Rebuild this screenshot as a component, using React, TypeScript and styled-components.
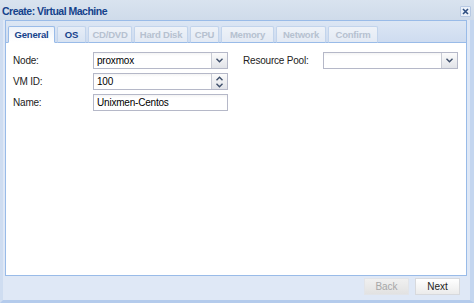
import styled, { createGlobalStyle } from 'styled-components';

const GlobalStyle = createGlobalStyle`
  html, body {
    margin: 0;
    padding: 0;
    background: #ffffff;
  }
  body {
    font-family: "Liberation Sans", Arial, sans-serif;
    font-size: 10px;
  }
`;

interface TabDef {
  label: string;
  active?: boolean;
  disabled?: boolean;
  width: number;
}

const tabs: TabDef[] = [
  { label: "General", active: true, width: 47 },
  { label: "OS", width: 29 },
  { label: "CD/DVD", disabled: true, width: 44 },
  { label: "Hard Disk", disabled: true, width: 54 },
  { label: "CPU", disabled: true, width: 29 },
  { label: "Memory", disabled: true, width: 53 },
  { label: "Network", disabled: true, width: 50 },
  { label: "Confirm", disabled: true, width: 50 },
];

const ChevronDown = () => (
  <svg width="7" height="5" viewBox="0 0 7 5">
    <path d="M0.5 0.8 L3.5 3.8 L6.5 0.8" stroke="#3d4e6a" strokeWidth="1.4" fill="none" />
  </svg>
);

const SpinIcon = () => (
  <svg width="7" height="12" viewBox="0 0 7 12">
    <path d="M0.5 4.2 L3.5 1.2 L6.5 4.2" stroke="#3d4e6a" strokeWidth="1.4" fill="none" />
    <path d="M0.5 7.8 L3.5 10.8 L6.5 7.8" stroke="#3d4e6a" strokeWidth="1.4" fill="none" />
  </svg>
);

const CloseIcon = () => (
  <svg width="7" height="7" viewBox="0 0 7 7">
    <path d="M1 1 L6 6 M6 1 L1 6" stroke="#2f4f82" strokeWidth="1.6" fill="none" />
  </svg>
);

function TextField({ value, trigger }: { value: string; trigger?: 'combo' | 'spin' }) {
  return (
    <FieldBox>
      <FieldText>{value}</FieldText>
      {trigger && (
        <Trigger>{trigger === 'combo' ? <ChevronDown /> : <SpinIcon />}</Trigger>
      )}
    </FieldBox>
  );
}

export default function App() {
  return (
    <>
      <GlobalStyle />
      <Window>
        <Header>
          <Title>Create: Virtual Machine</Title>
          <CloseButton><CloseIcon /></CloseButton>
        </Header>
        <Body>
          <TabPanel>
            <TabStrip>
              {tabs.map(t => (
                <Tab key={t.label} $active={t.active} $disabled={t.disabled} $width={t.width}>
                  {t.label}
                </Tab>
              ))}
            </TabStrip>
            <Content>
              <Column>
                <Row>
                  <Label>Node:</Label>
                  <TextField value="proxmox" trigger="combo" />
                </Row>
                <Row>
                  <Label>VM ID:</Label>
                  <TextField value="100" trigger="spin" />
                </Row>
                <Row>
                  <Label>Name:</Label>
                  <TextField value="Unixmen-Centos" />
                </Row>
              </Column>
              <Column>
                <Row>
                  <Label>Resource Pool:</Label>
                  <TextField value="" trigger="combo" />
                </Row>
              </Column>
            </Content>
          </TabPanel>
          <Footer>
            <Button $disabled>Back</Button>
            <Button>Next</Button>
          </Footer>
        </Body>
      </Window>
    </>
  );
}

const Window = styled.div`
  width: 474px;
  height: 303px;
  box-sizing: border-box;
  display: flex;
  flex-direction: column;
  background: #dfe8f6;
  border-right: 4px solid #c4d6ef;
  border-left: 3px solid #cfddf1;
  border-bottom: 3px solid #b4cbec;
`;

const Header = styled.div`
  height: 20px;
  flex: none;
  display: flex;
  align-items: center;
  justify-content: space-between;
  padding: 0 3px 0 0;
  margin-left: -3px;
  margin-right: -4px;
  background: linear-gradient(#d9e3ef, #cfdbea);
`;

const Title = styled.div`
  color: #15428b;
  font-weight: bold;
  font-size: 10.5px;
  letter-spacing: -0.5px;
  padding-left: 2px;
  padding-top: 1px;
`;

const CloseButton = styled.div`
  width: 11px;
  height: 11px;
  box-sizing: border-box;
  display: flex;
  align-items: center;
  justify-content: center;
  margin-top: 2px;
  border: 1px solid #b7c9e3;
  border-radius: 1px;
  background: #e9f0f9;
`;

const Body = styled.div`
  flex: 1;
  display: flex;
  flex-direction: column;
  padding: 0 3px 0 2px;
`;

const TabPanel = styled.div`
  flex: 1;
  display: flex;
  flex-direction: column;
  border: 1px solid #99bbe8;
`;

const TabStrip = styled.div`
  height: 22px;
  flex: none;
  display: flex;
  align-items: flex-end;
  gap: 2px;
  padding-left: 2px;
  box-sizing: border-box;
  background: linear-gradient(#dce6f4, #cedcf0);
  border-bottom: 1px solid #99bbe8;
`;

const Tab = styled.div<{ $active?: boolean; $disabled?: boolean; $width: number }>`
  width: ${p => p.$width}px;
  height: 17px;
  box-sizing: border-box;
  display: flex;
  align-items: center;
  justify-content: center;
  font-weight: bold;
  font-size: 9.5px;
  letter-spacing: -0.2px;
  margin-bottom: -1px;
  border: 1px solid ${p => (p.$active ? '#99bbe8' : '#c2d4ec')};
  border-bottom: ${p => (p.$active ? '1px solid #ffffff' : '1px solid #99bbe8')};
  border-radius: 2px 2px 0 0;
  color: ${p => (p.$disabled ? '#b6c1d0' : '#15428b')};
  background: ${p =>
    p.$active
      ? 'linear-gradient(#eef3fa, #ffffff)'
      : p.$disabled
      ? 'linear-gradient(#eef2f8, #e3eaf4)'
      : 'linear-gradient(#e6edf7, #d8e3f2)'};
`;

const Content = styled.div`
  flex: 1;
  background: #ffffff;
  display: flex;
  gap: 15px;
  padding: 9px 0 0 7px;
`;

const Column = styled.div`
  width: 215px;
  display: flex;
  flex-direction: column;
  gap: 4px;
`;

const Row = styled.div`
  display: flex;
  align-items: center;
  height: 17px;
`;

const Label = styled.div`
  width: 80px;
  flex: none;
  color: #222222;
  font-size: 10px;
  letter-spacing: -0.2px;
`;

const FieldBox = styled.div`
  width: 135px;
  height: 17px;
  box-sizing: border-box;
  display: flex;
  border: 1px solid #b5b8c8;
  background: linear-gradient(#f4f4f4 0, #ffffff 3px);
`;

const FieldText = styled.div`
  flex: 1;
  padding-left: 3px;
  font-size: 10px;
  letter-spacing: -0.2px;
  line-height: 15px;
  color: #000000;
  overflow: hidden;
  white-space: nowrap;
`;

const Trigger = styled.div`
  width: 15px;
  flex: none;
  display: flex;
  align-items: center;
  justify-content: center;
  border-left: 1px solid #c8cbd4;
  background: linear-gradient(#fbfbfb, #e1e3e8);
`;

const Footer = styled.div`
  height: 22px;
  flex: none;
  display: flex;
  justify-content: flex-end;
  align-items: flex-start;
  gap: 6px;
  padding: 2px 7px 0 0;
`;

const Button = styled.div<{ $disabled?: boolean }>`
  width: 45px;
  height: 17px;
  box-sizing: border-box;
  display: flex;
  align-items: center;
  justify-content: center;
  font-size: 10px;
  color: ${p => (p.$disabled ? '#a7a7a7' : '#222222')};
  border: 1px solid ${p => (p.$disabled ? '#e2e4e8' : '#d7d9dd')};
  background: ${p =>
    p.$disabled
      ? 'linear-gradient(#f0f0f0, #e2e2e2)'
      : 'linear-gradient(#ffffff, #ebebeb)'};
`;
